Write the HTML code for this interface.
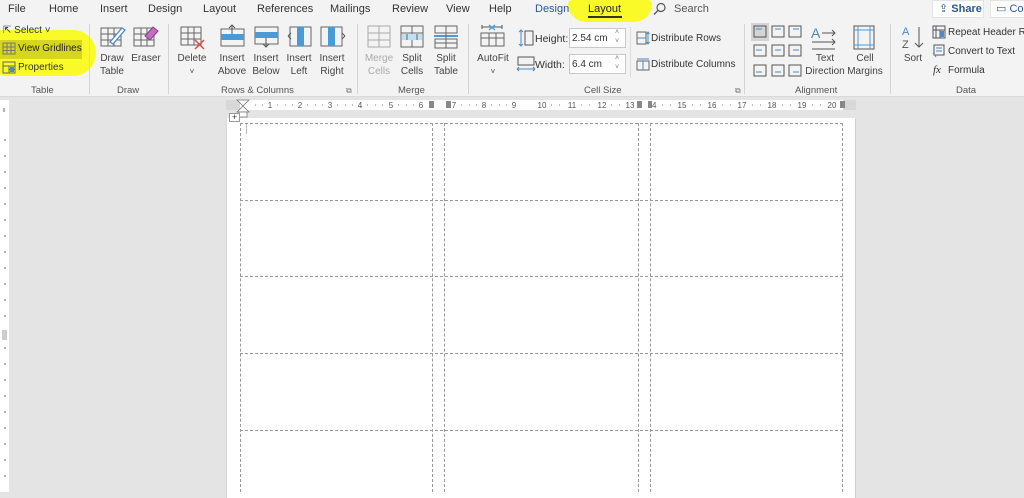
<!DOCTYPE html>
<html><head><meta charset="utf-8"><style>
*{margin:0;padding:0;box-sizing:border-box}
body{width:1024px;height:492px;overflow:hidden;background:#e4e4e4;font-family:"Liberation Sans",sans-serif;font-size:10px;color:#333;position:relative}
.a{position:absolute;white-space:nowrap}
.tab{position:absolute;top:3px;font-size:11px;color:#333}
.lbl{position:absolute;text-align:center;font-size:10px;line-height:13px;color:#444}
.gl{position:absolute;top:85px;font-size:9.5px;color:#555}
.sep{position:absolute;top:24px;width:1px;height:70px;background:#d4d4d4}
.hl{position:absolute;background:#fafa28;border-radius:14px}
.vl{position:absolute;top:123px;bottom:0;width:0;border-left:1px dashed #999}
.hz{position:absolute;left:240px;width:603px;height:0;border-top:1px dashed #999}
</style></head><body>
<div class="a" style="left:0;top:0;width:1024px;height:97px;background:#f3f3f3;border-bottom:1px solid #dadada"></div>
<div class="hl" style="left:568px;top:0;width:84px;height:22px;border-radius:4px 4px 18px 18px"></div>
<div class="hl" style="left:-4px;top:30px;width:100px;height:46px;border-radius:6px 24px 24px 10px"></div>
<div class="a" style="left:0;top:40px;width:82px;height:19px;background:#d6d61e"></div>
<div class="tab" style="left:8px">File</div>
<div class="tab" style="left:49px">Home</div>
<div class="tab" style="left:100px">Insert</div>
<div class="tab" style="left:148px">Design</div>
<div class="tab" style="left:203px">Layout</div>
<div class="tab" style="left:257px">References</div>
<div class="tab" style="left:330px">Mailings</div>
<div class="tab" style="left:392px">Review</div>
<div class="tab" style="left:446px">View</div>
<div class="tab" style="left:489px">Help</div>
<div class="tab" style="left:535px;color:#2b5797">Design</div>
<div class="tab" style="left:588px;color:#222">Layout</div>
<div class="a" style="left:588px;top:16px;width:34px;height:2px;background:#333"></div>
<svg class="a" style="left:652px;top:2px" width="14" height="14"><circle cx="9" cy="5.5" r="4" fill="none" stroke="#555" stroke-width="1.2"/><line x1="6" y1="8.5" x2="2" y2="12.5" stroke="#555" stroke-width="1.3"/></svg>
<div class="tab" style="left:674px;color:#555">Search</div>
<div class="a" style="left:932px;top:0;width:52px;height:18px;background:#fff;border:1px solid #e4e4e4"></div>
<div class="a" style="left:939px;top:2px;font-size:11px;color:#2b5797">⇪ <b style="font-weight:bold">Share</b></div>
<div class="a" style="left:990px;top:0;width:40px;height:18px;background:#fff;border:1px solid #e4e4e4"></div>
<div class="a" style="left:996px;top:2px;font-size:11px;color:#2b5797">▭ Co</div>

<div class="a" style="left:3px;top:25px;font-size:10px">⇱ Select ˅</div>
<svg class="a" style="left:2px;top:42px" width="14" height="13"><rect x="1" y="1" width="12" height="11" fill="none" stroke="#777"/><path d="M1 5h12M1 8.5h12M5 1v11M9 1v11" stroke="#777"/></svg>
<div class="a" style="left:18px;top:43px;color:#222">View Gridlines</div>
<svg class="a" style="left:2px;top:61px" width="14" height="13"><rect x="1" y="1" width="12" height="11" fill="none" stroke="#666"/><path d="M1 5h12M7 5v7M7 8.5h6" stroke="#666"/><rect x="8" y="6" width="4" height="5" fill="#4a8ac9"/></svg>
<div class="a" style="left:18px;top:62px">Properties</div>
<div class="gl" style="left:31px">Table</div>
<div class="sep" style="left:89px"></div>
<svg class="a" style="left:100px;top:24px" width="26" height="24"><rect x="1" y="4" width="20" height="18" fill="none" stroke="#666"/><path d="M1 10h20M1 16h20M8 4v18M14 4v18" stroke="#666"/><path d="M10 18L22 4l3 2-12 14z" fill="#fff" stroke="#4a8ac9" stroke-width="1.3"/></svg>
<div class="lbl" style="left:96px;top:52px;width:32px">Draw<br>Table</div>
<svg class="a" style="left:133px;top:24px" width="26" height="24"><rect x="1" y="4" width="20" height="18" fill="none" stroke="#666"/><path d="M1 10h20M1 16h20M8 4v18M14 4v18" stroke="#666"/><path d="M12 12l8-9 5 4-8 9z" fill="#c070c0" stroke="#8a3a8a"/></svg>
<div class="lbl" style="left:128px;top:52px;width:36px">Eraser</div>
<div class="gl" style="left:117px">Draw</div>
<div class="sep" style="left:168px"></div>
<svg class="a" style="left:180px;top:26px" width="26" height="24"><rect x="1" y="1" width="20" height="18" fill="none" stroke="#666"/><path d="M1 7h20M1 13h20M8 1v18M14 1v18" stroke="#666"/><path d="M15 14l9 9M24 14l-9 9" stroke="#e04848" stroke-width="1.5"/></svg>
<div class="lbl" style="left:174px;top:52px;width:36px">Delete<br><span style="font-size:8px">˅</span></div>
<svg class="a" style="left:220px;top:24px" width="26" height="24"><rect x="1" y="5" width="23" height="17" fill="none" stroke="#666"/><rect x="1" y="10" width="23" height="6" fill="#4a9ad8"/><path d="M12 1v9M9 4l3-3 3 3" stroke="#555" fill="none"/></svg>
<div class="lbl" style="left:214px;top:52px;width:36px">Insert<br>Above</div>
<svg class="a" style="left:254px;top:24px" width="26" height="24"><rect x="1" y="3" width="23" height="17" fill="none" stroke="#666"/><rect x="1" y="8" width="23" height="6" fill="#4a9ad8"/><path d="M12 14v9M9 20l3 3 3-3" stroke="#555" fill="none"/></svg>
<div class="lbl" style="left:248px;top:52px;width:36px">Insert<br>Below</div>
<svg class="a" style="left:287px;top:24px" width="26" height="24"><rect x="3" y="3" width="21" height="19" fill="none" stroke="#666"/><rect x="10" y="3" width="7" height="19" fill="#4a9ad8"/><path d="M1 12l3-3M1 12l3 3" stroke="#555"/></svg>
<div class="lbl" style="left:281px;top:52px;width:36px">Insert<br>Left</div>
<svg class="a" style="left:320px;top:24px" width="26" height="24"><rect x="1" y="3" width="21" height="19" fill="none" stroke="#666"/><rect x="8" y="3" width="7" height="19" fill="#4a9ad8"/><path d="M25 12l-3-3M25 12l-3 3" stroke="#555"/></svg>
<div class="lbl" style="left:314px;top:52px;width:36px">Insert<br>Right</div>
<div class="a" style="left:346px;top:86px;font-size:8px;color:#777">⧉</div>
<div class="gl" style="left:221px">Rows &amp; Columns</div>
<div class="sep" style="left:357px"></div>
<svg class="a" style="left:367px;top:25px" width="26" height="24"><rect x="1" y="1" width="22" height="21" fill="none" stroke="#aaa"/><path d="M1 8h22M1 15h22M12 1v21" stroke="#aaa"/></svg>
<div class="lbl" style="left:361px;top:52px;width:36px;color:#aaa">Merge<br>Cells</div>
<svg class="a" style="left:400px;top:25px" width="26" height="24"><rect x="1" y="1" width="22" height="21" fill="none" stroke="#666"/><path d="M1 8h22M12 1v21" stroke="#666"/><rect x="2" y="9" width="20" height="6" fill="#bfe0f4"/><path d="M7 9v6M17 9v6" stroke="#666"/></svg>
<div class="lbl" style="left:394px;top:52px;width:36px">Split<br>Cells</div>
<svg class="a" style="left:434px;top:25px" width="26" height="24"><rect x="1" y="1" width="22" height="7" fill="none" stroke="#666"/><path d="M0 11h24" stroke="#4a9ad8" stroke-width="2"/><rect x="1" y="14" width="22" height="9" fill="none" stroke="#666"/><path d="M12 1v22M1 18h22" stroke="#666"/></svg>
<div class="lbl" style="left:428px;top:52px;width:36px">Split<br>Table</div>
<div class="gl" style="left:398px">Merge</div>
<div class="sep" style="left:468px"></div>
<svg class="a" style="left:480px;top:24px" width="26" height="24"><path d="M2 3h20M2 1v4M22 1v4" stroke="#555"/><path d="M9 1l6 5M15 1l-6 5" stroke="#4a9ad8" stroke-width="1.3"/><rect x="1" y="9" width="23" height="13" fill="none" stroke="#666"/><path d="M1 14h23M9 9v13M16 9v13" stroke="#666"/></svg>
<div class="lbl" style="left:474px;top:52px;width:38px">AutoFit<br><span style="font-size:8px">˅</span></div>
<svg class="a" style="left:518px;top:29px" width="16" height="18"><path d="M3 1v16M1 3l2-2 2 2M1 15l2 2 2-2" stroke="#4a8ac9" fill="none"/><rect x="7" y="2" width="8" height="14" fill="none" stroke="#555"/></svg>
<div class="a" style="left:535px;top:33px;font-size:10.5px">Height:</div>
<div class="a" style="left:569px;top:28px;width:57px;height:20px;background:#fff;border:1px solid #c8c8c8"></div>
<div class="a" style="left:572px;top:33px;font-size:10px">2.54 cm</div>
<div class="a" style="left:615px;top:28px;font-size:7px;line-height:9px;color:#777">˄<br>˅</div>
<svg class="a" style="left:516px;top:55px" width="20" height="18"><rect x="2" y="2" width="16" height="8" fill="none" stroke="#555"/><path d="M1 14h18M1 14l2-2M1 14l2 2M19 14l-2-2M19 14l-2 2" stroke="#4a8ac9" fill="none"/></svg>
<div class="a" style="left:535px;top:59px;font-size:10.5px">Width:</div>
<div class="a" style="left:569px;top:54px;width:57px;height:20px;background:#fff;border:1px solid #c8c8c8"></div>
<div class="a" style="left:572px;top:59px;font-size:10px">6.4 cm</div>
<div class="a" style="left:615px;top:54px;font-size:7px;line-height:9px;color:#777">˄<br>˅</div>
<div class="a" style="left:630px;top:27px;width:1px;height:50px;background:#ddd"></div>
<svg class="a" style="left:636px;top:31px" width="14" height="14"><rect x="1" y="1" width="9" height="12" fill="none" stroke="#666"/><path d="M1 7h9M12 1v12M10.5 3l1.5-2 1.5 2M10.5 11l1.5 2 1.5-2" stroke="#4a8ac9" fill="none"/></svg>
<div class="a" style="left:651px;top:33px;font-size:10px">Distribute Rows</div>
<svg class="a" style="left:636px;top:57px" width="14" height="14"><rect x="1" y="4" width="12" height="9" fill="none" stroke="#666"/><path d="M7 4v9M1 2h12" stroke="#4a8ac9"/></svg>
<div class="a" style="left:651px;top:59px;font-size:10px">Distribute Columns</div>
<div class="a" style="left:735px;top:86px;font-size:8px;color:#777">⧉</div>
<div class="gl" style="left:584px">Cell Size</div>
<div class="sep" style="left:744px"></div>
<div class="a" style="left:751px;top:23px;width:18px;height:18px;background:#d4d4d4"></div>
<svg class="a" style="left:753px;top:25px" width="50" height="54">
<g fill="none" stroke="#555"><rect x="1" y="1" width="12" height="11"/><rect x="19" y="1" width="12" height="11"/><rect x="36" y="1" width="12" height="11"/>
<rect x="1" y="20" width="12" height="11"/><rect x="19" y="20" width="12" height="11"/><rect x="36" y="20" width="12" height="11"/>
<rect x="1" y="40" width="12" height="11"/><rect x="19" y="40" width="12" height="11"/><rect x="36" y="40" width="12" height="11"/></g>
<g stroke="#4a8ac9"><path d="M3 4h6M22 4h6M40 4h6M3 25h6M22 25h6M40 25h6M3 47h6M22 47h6M40 47h6"/></g></svg>
<svg class="a" style="left:810px;top:25px" width="28" height="26"><text x="1" y="13" font-family="Liberation Sans" font-size="14" fill="#4a8ac9">A</text><path d="M12 8h13M22 5l3 3-3 3M2 17h23M22 14l3 3-3 3M2 24h23" stroke="#555" fill="none"/></svg>
<div class="lbl" style="left:803px;top:52px;width:44px">Text<br>Direction</div>
<svg class="a" style="left:853px;top:25px" width="24" height="26"><rect x="1" y="1" width="20" height="23" fill="none" stroke="#555"/><path d="M5 1v23M17 1v23M1 5h20M1 20h20" stroke="#4a9ad8"/></svg>
<div class="lbl" style="left:844px;top:52px;width:42px">Cell<br>Margins</div>
<div class="gl" style="left:795px">Alignment</div>
<div class="sep" style="left:890px"></div>
<svg class="a" style="left:901px;top:24px" width="26" height="28"><text x="1" y="11" font-family="Liberation Sans" font-size="11" fill="#4a8ac9">A</text><text x="1" y="24" font-family="Liberation Sans" font-size="11" fill="#555">Z</text><path d="M18 3v20M14 19l4 4 4-4" stroke="#555" fill="none"/></svg>
<div class="lbl" style="left:898px;top:52px;width:30px">Sort</div>
<svg class="a" style="left:932px;top:25px" width="14" height="14"><rect x="1" y="1" width="12" height="12" fill="none" stroke="#555"/><path d="M4 1v12M1 5h12M8 5v8" stroke="#555"/><rect x="8" y="6" width="4" height="6" fill="#4a8ac9"/></svg>
<div class="a" style="left:948px;top:27px;font-size:10px">Repeat Header Rows</div>
<svg class="a" style="left:932px;top:44px" width="14" height="14"><rect x="2" y="1" width="10" height="10" fill="none" stroke="#555"/><path d="M4 4h6M4 7h6M1 9l3 4" stroke="#4a8ac9" fill="none"/></svg>
<div class="a" style="left:948px;top:46px;font-size:10px">Convert to Text</div>
<div class="a" style="left:933px;top:64px;font-size:11px;font-style:italic;font-family:'Liberation Serif',serif">fx</div>
<div class="a" style="left:948px;top:65px;font-size:10px">Formula</div>
<div class="gl" style="left:956px">Data</div>

<div class="a" style="left:226px;top:100px;width:630px;height:10px;background:#d8d8d8"></div>
<div class="a" style="left:240px;top:100px;width:603px;height:10px;background:#fff"></div>
<svg class="a" style="left:226px;top:99px" width="630" height="22">
<g font-family="Liberation Sans" font-size="8" fill="#555" text-anchor="middle">
<text x="44" y="9">1</text><text x="74" y="9">2</text><text x="104" y="9">3</text><text x="134" y="9">4</text><text x="165" y="9">5</text><text x="195" y="9">6</text><text x="228" y="9">7</text><text x="258" y="9">8</text><text x="288" y="9">9</text><text x="316" y="9">10</text><text x="346" y="9">11</text><text x="376" y="9">12</text><text x="404" y="9">13</text><text x="426" y="9">14</text><text x="456" y="9">15</text><text x="486" y="9">16</text><text x="516" y="9">17</text><text x="546" y="9">18</text><text x="576" y="9">19</text><text x="606" y="9">20</text></g>
<path d="M29 6h1M36 6h1M51 6h1M59 6h1M66 6h1M81 6h1M89 6h1M96 6h1M111 6h1M119 6h1M126 6h1M141 6h1M149 6h1M156 6h1M172 6h1M180 6h1M187 6h1M235 6h1M243 6h1M250 6h1M265 6h1M273 6h1M280 6h1M325 6h1M333 6h1M355 6h1M363 6h1M385 6h1M393 6h1M436 6h1M444 6h1M466 6h1M474 6h1M496 6h1M504 6h1M526 6h1M534 6h1M556 6h1M564 6h1M586 6h1M594 6h1" stroke="#777"/>
<path d="M11 1l6 6-6 6h12l-6-6 6-6z" fill="#fff" stroke="#777" stroke-width=".8"/>
<rect x="13" y="13" width="8" height="5" fill="#fff" stroke="#777" stroke-width=".8"/>
<rect x="203" y="2" width="5" height="7" fill="#888"/><rect x="220" y="2" width="5" height="7" fill="#888"/><rect x="614" y="2" width="5" height="7" fill="#888"/><rect x="411" y="2" width="5" height="7" fill="#888"/><rect x="422" y="2" width="4" height="7" fill="#888"/>
</svg>
<div class="a" style="left:0;top:100px;width:9px;height:392px;background:#fff"></div>
<svg class="a" style="left:0;top:100px" width="9" height="392"><path d="M4 8v4M4 40h2M4 56h2M4 72h2M4 88h2M4 104h2M4 120h2M4 136h2M4 152h2M4 168h2M4 184h2M4 200h2M4 216h2M4 232h2M4 248h2M4 264h2M4 280h2M4 296h2M4 312h2M4 328h2M4 344h2M4 360h2M4 376h2" stroke="#666"/><rect x="2" y="230" width="5" height="10" fill="#ccc"/></svg>

<div class="a" style="left:226px;top:118px;width:630px;height:380px;background:#fff;border-left:1px solid #d8d8d8;border-right:1px solid #d0d0d0"></div>
<div class="a" style="left:229px;top:113px;width:11px;height:9px;background:#fff;border:1px solid #999;font-size:9px;line-height:7px;text-align:center">+</div>
<div class="vl" style="left:240px"></div>
<div class="vl" style="left:432px"></div>
<div class="vl" style="left:444px"></div>
<div class="vl" style="left:638px"></div>
<div class="vl" style="left:650px"></div>
<div class="vl" style="left:842px"></div>
<div class="hz" style="top:123px"></div>
<div class="hz" style="top:200px"></div>
<div class="hz" style="top:276px"></div>
<div class="hz" style="top:353px"></div>
<div class="hz" style="top:430px"></div>
<div class="a" style="left:246px;top:124px;width:1px;height:10px;background:#bbb"></div>
</body></html>
